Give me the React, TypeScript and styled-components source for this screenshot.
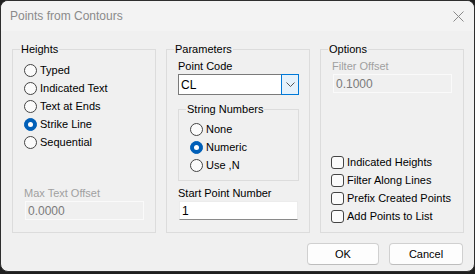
import React from 'react';
import styled, { createGlobalStyle } from 'styled-components';

const GlobalStyle = createGlobalStyle`
  html, body {
    margin: 0;
    padding: 0;
    background: #1f1f1f;
  }
  body {
    font-family: "Liberation Sans", Arial, sans-serif;
    font-size: 11px;
    color: #000;
  }
`;

const App: React.FC = () => {
  return <>
    <GlobalStyle />
    <Window>
      <TitleBar>
        <Title>Points from Contours</Title>
        <CloseIcon width="11" height="11" viewBox="0 0 11 11">
          <path d="M0.5 0.5 L10.5 10.5 M10.5 0.5 L0.5 10.5" stroke="#8a8a8a" strokeWidth="1" />
        </CloseIcon>
      </TitleBar>
      <Body>
        <Groups>
          <Group>
            <Legend>Heights</Legend>
            <RadioList $top={5} $left={11}>
              <Radio label="Typed" />
              <Radio label="Indicated Text" />
              <Radio label="Text at Ends" />
              <Radio label="Strike Line" checked />
              <Radio label="Sequential" />
            </RadioList>
            <BottomField>
              <FieldLabel $disabled>Max Text Offset</FieldLabel>
              <TextBox $disabled>0.0000</TextBox>
            </BottomField>
          </Group>

          <Group>
            <Legend>Parameters</Legend>
            <TopField>
              <FieldLabel>Point Code</FieldLabel>
              <Combo>
                <ComboText>CL</ComboText>
                <ComboButton>
                  <svg width="9" height="5" viewBox="0 0 9 5">
                    <path d="M0.5 0.5 L4.5 4.5 L8.5 0.5" fill="none" stroke="#555" strokeWidth="1" />
                  </svg>
                </ComboButton>
              </Combo>
            </TopField>
            <SubGroup>
              <Legend>String Numbers</Legend>
              <RadioList $top={4} $left={11}>
                <Radio label="None" />
                <Radio label="Numeric" checked />
                <Radio label="Use ,N" />
              </RadioList>
            </SubGroup>
            <BottomField>
              <FieldLabel>Start Point Number</FieldLabel>
              <TextBox>1</TextBox>
            </BottomField>
          </Group>

          <Group>
            <Legend>Options</Legend>
            <TopField>
              <FieldLabel $disabled>Filter Offset</FieldLabel>
              <TextBox $disabled>0.1000</TextBox>
            </TopField>
            <CheckList>
              <Check label="Indicated Heights" />
              <Check label="Filter Along Lines" />
              <Check label="Prefix Created Points" />
              <Check label="Add Points to List" />
            </CheckList>
          </Group>
        </Groups>
        <ButtonRow>
          <Button $width={72}>OK</Button>
          <Button $width={74}>Cancel</Button>
        </ButtonRow>
      </Body>
    </Window>
  </>;
};

const Radio: React.FC<{ label: string; checked?: boolean }> = ({ label, checked }) => (
  <OptionRow>
    <RadioCircle $checked={!!checked} />
    <span>{label}</span>
  </OptionRow>
);

const Check: React.FC<{ label: string }> = ({ label }) => (
  <OptionRow>
    <CheckSquare />
    <span>{label}</span>
  </OptionRow>
);

export default App;

const Window = styled.div`
  box-sizing: border-box;
  width: 475px;
  height: 272px;
  border: 1px solid #2e2e2e;
  border-radius: 8px;
  overflow: hidden;
  background: #f0f0f0;
`;

const TitleBar = styled.div`
  height: 30px;
  background: #f3f3f3;
  display: flex;
  align-items: center;
  justify-content: space-between;
  padding: 0 10px 0 9px;
`;

const Title = styled.span`
  font-size: 12px;
  color: #8a8a8a;
`;

const CloseIcon = styled.svg`
  display: block;
`;

const Body = styled.div`
  padding: 18px 10px 0 11px;
`;

const Groups = styled.div`
  display: grid;
  grid-template-columns: 144px 144px 144px;
  column-gap: 10px;
`;

const Group = styled.div`
  box-sizing: border-box;
  height: 184px;
  border: 1px solid #dcdcdc;
  display: flex;
  flex-direction: column;
`;

const Legend = styled.span`
  align-self: flex-start;
  margin: -7px 0 0 7px;
  padding: 0 1px;
  line-height: 13px;
  background: #f0f0f0;
`;

const RadioList = styled.div<{ $top: number; $left: number }>`
  display: flex;
  flex-direction: column;
  margin-top: ${p => p.$top}px;
  padding-left: ${p => p.$left}px;
`;

const OptionRow = styled.div`
  display: flex;
  align-items: center;
  gap: 3px;
  height: 18px;
`;

const RadioCircle = styled.span<{ $checked: boolean }>`
  box-sizing: border-box;
  width: 13px;
  height: 13px;
  border-radius: 50%;
  border: 1px solid ${p => (p.$checked ? '#005fb8' : '#444')};
  background: ${p => (p.$checked ? '#005fb8' : '#fbfbfb')};
  display: flex;
  align-items: center;
  justify-content: center;
  &::after {
    content: '';
    display: ${p => (p.$checked ? 'block' : 'none')};
    width: 5px;
    height: 5px;
    border-radius: 50%;
    background: #fff;
  }
`;

const CheckSquare = styled.span`
  box-sizing: border-box;
  width: 13px;
  height: 13px;
  border-radius: 3px;
  border: 1px solid #444;
  background: #fbfbfb;
`;

const TopField = styled.div`
  display: flex;
  flex-direction: column;
  align-items: flex-start;
  margin-top: 4px;
  padding-left: 11px;
`;

const BottomField = styled.div`
  display: flex;
  flex-direction: column;
  align-items: flex-start;
  margin-top: auto;
  padding: 0 0 12px 11px;
`;

const FieldLabel = styled.span<{ $disabled?: boolean }>`
  line-height: 13px;
  margin-bottom: 1px;
  color: ${p => (p.$disabled ? '#a0a0a0' : '#000')};
`;

const TextBox = styled.div<{ $disabled?: boolean }>`
  box-sizing: border-box;
  width: 119px;
  height: 19px;
  margin-left: 1px;
  padding-left: 2px;
  display: flex;
  align-items: center;
  font-size: 12px;
  background: ${p => (p.$disabled ? '#f0f0f0' : '#fff')};
  color: ${p => (p.$disabled ? '#7a7a7a' : '#000')};
  border: 1px solid ${p => (p.$disabled ? '#fafafa' : '#ececec')};
  border-bottom-color: ${p => (p.$disabled ? '#fafafa' : '#8a8a8a')};
`;

const Combo = styled.div`
  box-sizing: border-box;
  width: 121px;
  height: 21px;
  display: flex;
  background: #fff;
  border: 1px solid #7a7a7a;
  border-right: none;
`;

const ComboText = styled.span`
  flex: 1;
  display: flex;
  align-items: center;
  padding-left: 2px;
  font-size: 12px;
`;

const ComboButton = styled.span`
  box-sizing: border-box;
  width: 18px;
  margin: -1px 0;
  display: flex;
  align-items: center;
  justify-content: center;
  background: #e5f1fb;
  border: 1px solid #0078d7;
`;

const SubGroup = styled.div`
  box-sizing: border-box;
  margin: 14px 0 0 11px;
  width: 121px;
  height: 72px;
  border: 1px solid #dcdcdc;
  display: flex;
  flex-direction: column;
`;

const CheckList = styled.div`
  display: flex;
  flex-direction: column;
  margin-top: auto;
  padding: 0 0 7px 10px;
`;

const ButtonRow = styled.div`
  display: flex;
  justify-content: flex-end;
  gap: 10px;
  margin-top: 10px;
  padding-right: 1px;
`;

const Button = styled.button<{ $width: number }>`
  box-sizing: border-box;
  width: ${p => p.$width}px;
  height: 22px;
  padding: 0;
  font-family: "Liberation Sans", Arial, sans-serif;
  font-size: 11px;
  color: #000;
  background: #fdfdfd;
  border: 1px solid #d0d0d0;
  border-bottom-color: #bdbdbd;
  border-radius: 4px;
`;
